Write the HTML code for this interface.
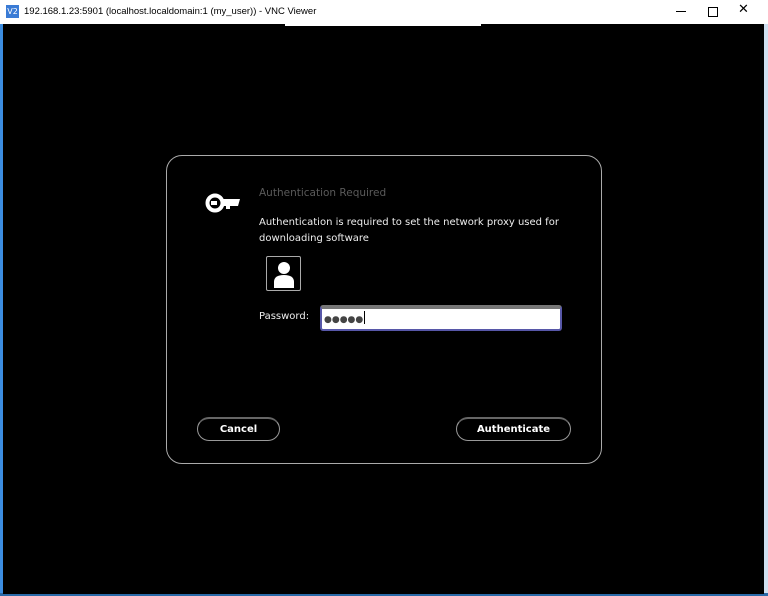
<!DOCTYPE html>
<html><head><style>
body{margin:0;width:768px;height:596px;overflow:hidden;background:#fff;font-family:"DejaVu Sans","Liberation Sans",sans-serif;position:relative}
.tb{position:absolute;left:0;top:0;width:768px;height:24px;background:#fff}
.tb .t{position:absolute;left:24px;top:6px;font-size:9.5px;color:#000;font-family:"Liberation Sans",sans-serif}
.blk{position:absolute;left:3px;top:24px;width:761px;height:570px;background:#000}
.dlg{position:absolute;left:166px;top:155px;width:434px;height:307px;border:1.5px solid #aaa;border-radius:16px}
.txt{position:absolute;color:#eee;font-size:10px}
.btn{position:absolute;height:21px;border:1px solid #999;border-top:2px solid #666;border-radius:12px;color:#fff;font-weight:bold;font-size:10px;text-align:center;line-height:21px}
</style></head><body>
<div class="tb">
<div style="position:absolute;left:6px;top:5px;width:13px;height:13px;background:#3a7bd5;color:#fff;font-size:8px;line-height:13px;text-align:center">V2</div>
<div class="t">192.168.1.23:5901 (localhost.localdomain:1 (my_user)) - VNC Viewer</div>
<div style="position:absolute;left:676px;top:11px;width:10px;height:1px;background:#000"></div>
<div style="position:absolute;left:708px;top:7px;width:8px;height:8px;border:1px solid #000"></div>
<div style="position:absolute;left:738px;top:2px;font-size:13px;color:#000">✕</div>
</div>
<div style="position:absolute;left:0;top:24px;width:3px;height:572px;background:#3c8de0"></div>
<div style="position:absolute;left:764px;top:24px;width:4px;height:572px;background:#cfe0f0"></div>
<div style="position:absolute;left:0;top:593px;width:768px;height:3px;background:#2a6aa8"></div>
<div class="blk"></div>
<div style="position:absolute;left:285px;top:24px;width:196px;height:2px;background:#fff"></div>
<div class="dlg"></div>
<svg style="position:absolute;left:204px;top:191px" width="38" height="24" viewBox="0 0 38 24">
<circle cx="11" cy="12" r="7.5" fill="none" stroke="#fff" stroke-width="4"/>
<rect x="7" y="10" width="6" height="4" fill="#fff"/>
<path d="M18 8 H36 L34 15 H18 Z" fill="#fff"/>
<rect x="22" y="15" width="4" height="3" fill="#fff"/>
</svg>
<div class="txt" style="left:259px;top:187px;color:#5a5a5a;font-size:10.5px">Authentication Required</div>
<div class="txt" style="left:259px;top:215px;line-height:16px">Authentication is required to set the network proxy used for<br>downloading software</div>
<div style="position:absolute;left:266px;top:256px;width:33px;height:33px;border:1px solid #aaa;border-radius:2px"></div>
<svg style="position:absolute;left:272px;top:260px" width="24" height="30" viewBox="0 0 24 30">
<circle cx="12" cy="8" r="6" fill="#fff"/><path d="M2 28 V22 Q2 15 12 15 Q22 15 22 22 V28Z" fill="#fff"/></svg>
<div class="txt" style="left:259px;top:311px">Password:</div>
<div style="position:absolute;left:320px;top:305px;width:238px;height:20px;background:#fff;border:2px solid #5757a8;border-radius:3px;border-top:4px solid #777"></div>
<div style="position:absolute;left:324px;top:311px;font-size:9px;color:#444;letter-spacing:0px">●●●●●<span style="display:inline-block;width:1px;height:13px;background:#000;vertical-align:-2px;margin-left:1px"></span></div>
<div class="btn" style="left:197px;top:417px;width:81px">Cancel</div>
<div class="btn" style="left:456px;top:417px;width:113px">Authenticate</div>
</body></html>
